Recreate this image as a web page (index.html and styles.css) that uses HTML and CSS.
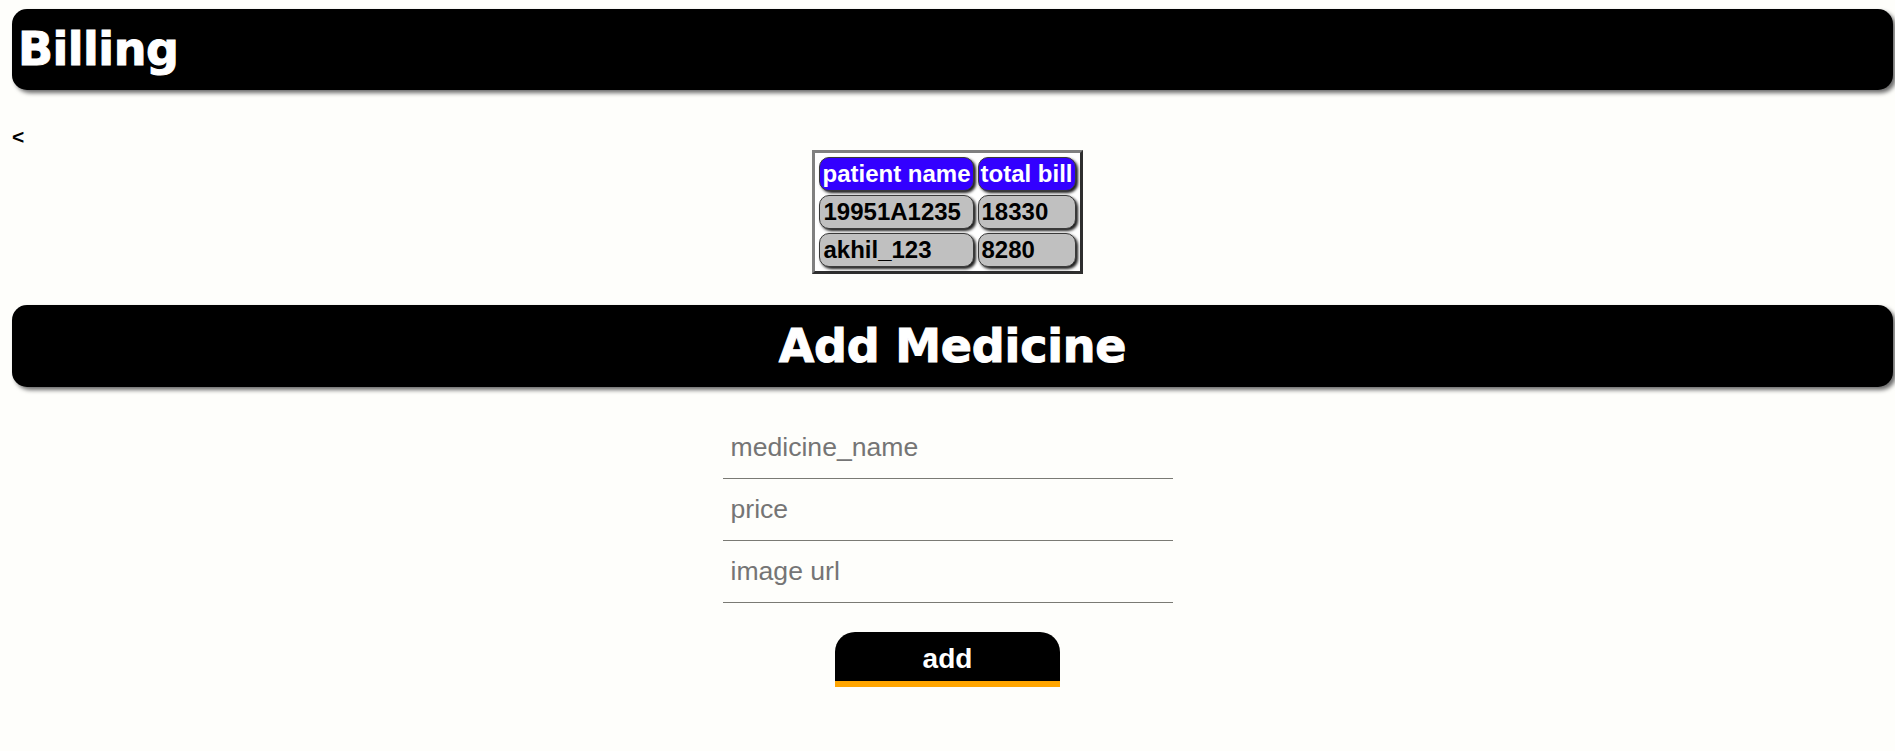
FILE: index.html
```html
<!DOCTYPE html>
<html>
<head>
<meta charset="utf-8">
<title>Billing</title>
<link rel="stylesheet" href="styles.css">
</head>
<body>
<h1 class="banner banner-left">Billing</h1>
<div class="back">&lt;</div>
<div class="table-wrap">
  <table class="bill-table">
    <tr><th>patient name</th><th>total bill</th></tr>
    <tr><td>19951A1235</td><td>18330</td></tr>
    <tr><td>akhil_123</td><td>8280</td></tr>
  </table>
</div>
<h1 class="banner banner-center">Add Medicine</h1>
<form class="med-form">
  <input class="field" type="text" placeholder="medicine_name">
  <input class="field" type="text" placeholder="price">
  <input class="field" type="text" placeholder="image url">
  <button class="add-btn" type="button">add</button>
</form>
</body>
</html>
```
FILE: styles.css
```css
html, body {
  margin: 0;
  padding: 0;
  background: #fefefb;
}
body {
  font-family: "Liberation Sans", Arial, sans-serif;
  color: #000;
}
.banner {
  margin: 0 2px 0 12px;
  height: 82px;
  line-height: 82px;
  background: #000;
  color: #fff;
  border-radius: 15px;
  box-shadow: 3px 3px 4px #6b6b6b;
  font-family: "DejaVu Sans", sans-serif;
  font-weight: bold;
  font-size: 46px;
  -webkit-text-stroke: 1px #fff;
  white-space: nowrap;
}
.banner-left {
  margin-top: 9px;
  height: 81px;
  line-height: 81px;
  padding-left: 6px;
  letter-spacing: -0.5px;
}
.banner-center {
  margin-top: 31px;
  text-align: center;
  letter-spacing: -0.2px;
}
.back {
  margin: 35px 0 0 12px;
  font-size: 21px;
  font-weight: bold;
  line-height: 23px;
  height: 23px;
}
.table-wrap {
  margin-top: 2px;
  display: flex;
  justify-content: center;
}
.bill-table {
  border: 3px solid;
  border-color: #808080 #2e2e2e #2e2e2e #808080;
  background: #fff;
  border-spacing: 4px;
  padding: 0;
}
.bill-table th,
.bill-table td {
  font-size: 24px;
  font-weight: bold;
  line-height: 30px;
  height: 30px;
  padding: 1px 2px 1px 3px;
  border: 1px solid #3a3a3a;
  border-radius: 10px;
  box-shadow: 2px 2px 3px #1a1a1a;
  text-align: left;
  white-space: nowrap;
}
.bill-table th {
  background: #3300ff;
  color: #fff;
  padding-left: 2px;
}
.bill-table td {
  background: #c0c0c0;
  color: #000;
}
.med-form {
  margin-top: 30px;
  display: flex;
  flex-direction: column;
  align-items: center;
}
.field {
  box-sizing: border-box;
  width: 450px;
  height: 62px;
  margin: 0;
  padding: 0 8px;
  border: none;
  border-bottom: 1px solid #7a7a74;
  background: transparent;
  font-family: "Liberation Sans", Arial, sans-serif;
  font-size: 26.6px;
  color: #333;
  outline: none;
}
.field::placeholder {
  color: #757575;
}
.add-btn {
  box-sizing: border-box;
  margin-top: 29px;
  width: 225px;
  height: 55px;
  background: #000;
  color: #fff;
  border: none;
  border-bottom: 6px solid #ffa500;
  border-radius: 20px 20px 0 0;
  font-family: "Liberation Sans", Arial, sans-serif;
  font-weight: bold;
  font-size: 28px;
  padding: 4px 0 0 0;
  cursor: pointer;
}
```
